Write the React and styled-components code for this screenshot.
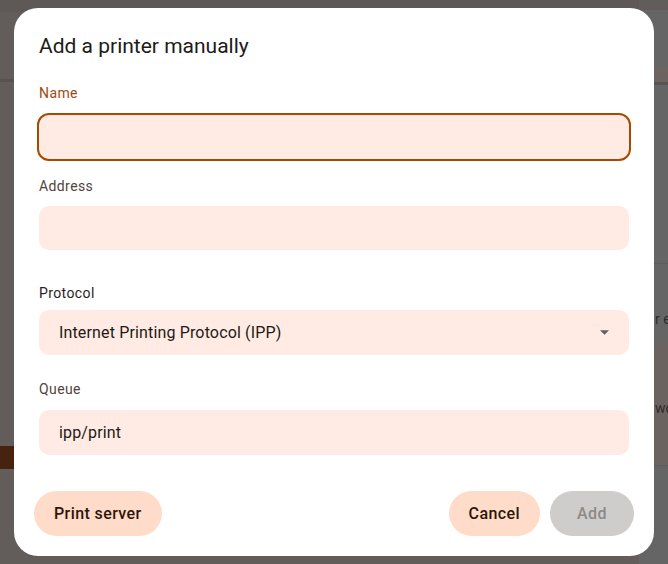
import React from 'react';
import styled, { createGlobalStyle } from 'styled-components';

const GlobalStyle = createGlobalStyle`
  html, body {
    margin: 0;
    padding: 0;
    height: 100%;
    overflow: hidden;
  }
  body {
    font-family: Roboto, "Noto Sans", "Liberation Sans", sans-serif;
    background: #625d5a;
  }
`;

// dimmed page behind the dialog
const Backdrop = styled.div`
  display: flex;
  height: 100vh;
  background: #625d5a;
`;
const MainColumn = styled.div`
  flex: 1;
  display: flex;
  flex-direction: column;
`;
const TopBar = styled.div`
  height: 82px;
  border-top: 12px solid #5e5956;
  box-sizing: border-box;
  border-bottom: 3px solid #57524f;
`;
const MainBody = styled.div`
  flex: 1;
  padding-top: 364px;
`;
const Band = styled.div`
  height: 23px;
  background: #45230f;
`;
const SidePanel = styled.div`
  width: 29px;
  margin-top: 10px;
  background: #666565;
  display: flex;
  flex-direction: column;
  overflow: hidden;
  white-space: nowrap;
`;
const PanelHead = styled.div`
  height: 57px;
  flex-shrink: 0;
`;
const PanelSub = styled.div`
  height: 15px;
  flex-shrink: 0;
  background: #6b6461;
  border-bottom: 3px solid #575453;
`;
const PanelRow = styled.div`
  height: ${(p) => p.$h}px;
  flex-shrink: 0;
  background: ${(p) => (p.$tint ? '#6b6360' : '#666565')};
  border-top: ${(p) => (p.$line ? '1px solid #5e5d5d' : 'none')};
  box-sizing: border-box;
  padding: ${(p) => p.$pad}px 0 0 16px;
  font-size: 14px;
  line-height: 16px;
  color: #2f2c2a;
`;

const Overlay = styled.div`
  position: fixed;
  inset: 0;
  display: flex;
  align-items: center;
  justify-content: center;
`;
const Dialog = styled.div`
  width: 640px;
  box-sizing: border-box;
  background: #ffffff;
  border-radius: 24px;
  padding: 24px 25px 20px;
  display: flex;
  flex-direction: column;
`;
const Title = styled.h2`
  margin: 0;
  font-size: 21px;
  line-height: 28px;
  font-weight: 400;
  color: #211a16;
`;
const Label = styled.div`
  margin-top: ${(p) => p.$top}px;
  font-size: 14px;
  line-height: 20px;
  letter-spacing: 0.4px;
  color: ${(p) => (p.$active ? '#9e4a0c' : p.$dark ? '#2b221d' : '#52433c')};
`;
const Field = styled.div`
  margin-top: ${(p) => p.$top}px;
  height: ${(p) => p.$h || 45}px;
  box-sizing: border-box;
  background: #ffebe3;
  border-radius: 10px;
  padding: 0 20px;
  display: flex;
  align-items: center;
  justify-content: space-between;
  font-size: 16px;
  letter-spacing: 0.15px;
  color: #221a15;
  outline: ${(p) => (p.$focused ? '2px solid #a54a00' : 'none')};
`;
const Arrow = styled.svg`
  width: 9px;
  height: 5px;
`;
const Footer = styled.div`
  margin: 36px -5px 0;
  display: flex;
  align-items: center;
  gap: 10px;
`;
const Spacer = styled.div`
  flex: 1;
`;
const Button = styled.button`
  height: 45px;
  min-width: ${(p) => (p.$min ? p.$min : 0)}px;
  padding: 0 20px;
  border: none;
  border-radius: 23px;
  font-family: inherit;
  font-size: 16px;
  font-weight: 500;
  letter-spacing: 0.4px;
  background: ${(p) => (p.disabled ? '#cfcdcc' : '#fedcc9')};
  color: ${(p) => (p.disabled ? '#8e8985' : '#2e1507')};
  cursor: ${(p) => (p.disabled ? 'default' : 'pointer')};
`;

export default function App() {
  return (
    <>
      <GlobalStyle />
      <Backdrop>
        <MainColumn>
          <TopBar />
          <MainBody>
            <Band />
          </MainBody>
        </MainColumn>
        <SidePanel>
          <PanelHead />
          <PanelSub />
          <PanelRow $h={178} $pad={0} />
          <PanelRow $h={80} $line $pad={47}>r edit</PanelRow>
          <PanelRow $h={122} $tint $pad={57}>work</PanelRow>
          <PanelRow $h={100} $line $pad={0} />
        </SidePanel>
      </Backdrop>
      <Overlay>
        <Dialog>
          <Title>Add a printer manually</Title>
          <Label $top={23} $active>Name</Label>
          <Field $top={12} $h={44} $focused />
          <Label $top={17}>Address</Label>
          <Field $top={10} $h={44} />
          <Label $top={33} $dark>Protocol</Label>
          <Field $top={7}>
            <span>Internet Printing Protocol (IPP)</span>
            <Arrow viewBox="0 0 10 5">
              <polygon points="0,0 10,0 5,5" fill="#5b5f66" />
            </Arrow>
          </Field>
          <Label $top={24}>Queue</Label>
          <Field $top={11}>ipp/print</Field>
          <Footer>
            <Button>Print server</Button>
            <Spacer />
            <Button>Cancel</Button>
            <Button $min={84} disabled>Add</Button>
          </Footer>
        </Dialog>
      </Overlay>
    </>
  );
}
